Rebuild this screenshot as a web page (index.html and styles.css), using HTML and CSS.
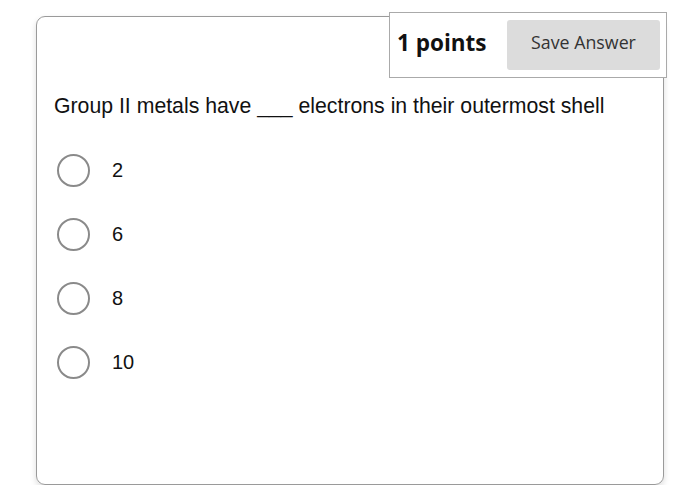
FILE: index.html
```html
<!DOCTYPE html>
<html>
<head>
<meta charset="utf-8">
<link rel="stylesheet" href="styles.css">
</head>
<body>
<div class="card">
  <div class="points-box">
    <span class="points">1 points</span>
    <button class="save">Save Answer</button>
  </div>
  <p class="question">Group II metals have ___ electrons in their outermost shell</p>
  <ul class="options">
    <li class="option"><span class="radio"></span><span class="label">2</span></li>
    <li class="option"><span class="radio"></span><span class="label">6</span></li>
    <li class="option"><span class="radio"></span><span class="label">8</span></li>
    <li class="option"><span class="radio"></span><span class="label">10</span></li>
  </ul>
</div>
</body>
</html>
```
FILE: styles.css
```css
html, body {
  margin: 0;
  padding: 0;
  background: #fff;
}
body {
  font-family: "Liberation Sans", Arial, sans-serif;
  color: #111;
}
.card {
  position: relative;
  box-sizing: border-box;
  margin: 16px 0 0 36px;
  width: 628px;
  height: 469px;
  border: 1.5px solid #9a9a9a;
  border-radius: 9px;
  box-shadow: 0 3px 6px rgba(0,0,0,0.14);
  padding: 74px 0 0 17px;
}
.points-box {
  position: absolute;
  top: -5px;
  right: -4px;
  box-sizing: border-box;
  width: 278px;
  height: 66px;
  border: 1.5px solid #aaa;
  background: #fff;
  display: flex;
  align-items: center;
  justify-content: space-between;
  padding: 0 6px 0 7px;
}
.points {
  font-family: "Open Sans", sans-serif;
  font-weight: bold;
  font-size: 22.5px;
  line-height: 1;
  color: #111;
  margin-top: -3px;
}
.save {
  font-family: "Open Sans", sans-serif;
  font-size: 17.8px;
  line-height: 1;
  color: #333;
  background: #dcdcdc;
  border: none;
  border-radius: 3px;
  width: 153px;
  height: 50px;
  padding: 0 0 3px 0;
  margin-top: -1px;
}
.question {
  margin: 0;
  font-size: 21.25px;
  line-height: 30px;
}
.options {
  list-style: none;
  margin: 17px 0 0 0;
  padding: 0;
}
.option {
  display: flex;
  align-items: center;
  height: 64px;
  font-size: 20px;
}
.radio {
  box-sizing: border-box;
  width: 33px;
  height: 33px;
  border: 2.5px solid #8a8a8a;
  border-radius: 50%;
  margin-left: 3px;
}
.label {
  margin-left: 22px;
}
```
